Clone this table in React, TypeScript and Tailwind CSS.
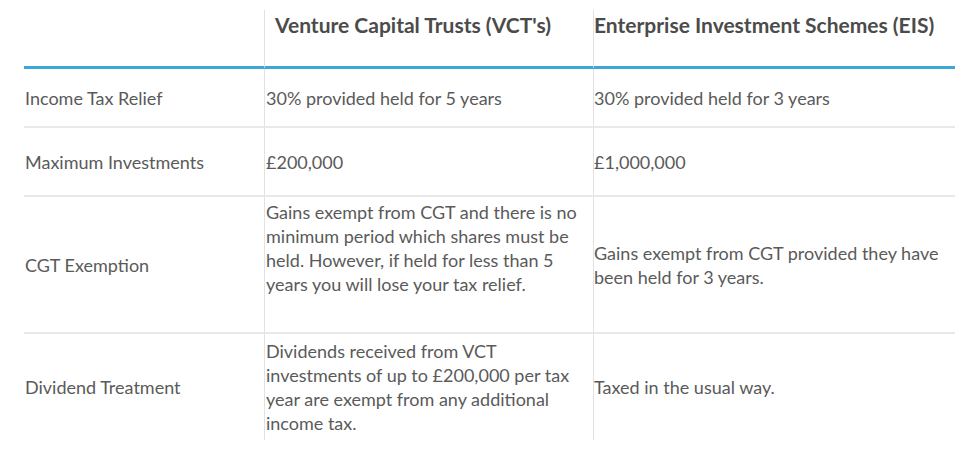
const font = { fontFamily: 'Lato, "Open Sans", sans-serif' };

type Row = {
  label: string;
  vct: string[];
  eis: string[];
  height: string;
  vctTop?: boolean;
  last?: boolean;
};

const rows: Row[] = [
  { label: 'Income Tax Relief', vct: ['30% provided held for 5 years'], eis: ['30% provided held for 3 years'], height: 'h-[59px]' },
  { label: 'Maximum Investments', vct: ['£200,000'], eis: ['£1,000,000'], height: 'h-[69px]' },
  {
    label: 'CGT Exemption',
    vct: [
      'Gains exempt from CGT and there is no',
      'minimum period which shares must be',
      'held. However, if held for less than 5',
      'years you will lose your tax relief.',
    ],
    eis: ['Gains exempt from CGT provided they have', 'been held for 3 years.'],
    height: 'h-[137px]',
    vctTop: true,
  },
  {
    label: 'Dividend Treatment',
    vct: [
      'Dividends received from VCT',
      'investments of up to £200,000 per tax',
      'year are exempt from any additional',
      'income tax.',
    ],
    eis: ['Taxed in the usual way.'],
    height: 'h-[106px]',
    last: true,
  },
];

const Lines = ({ lines }: { lines: string[] }) => (
  <div className="whitespace-nowrap">
    {lines.map((l, i) => (
      <div key={i}>{l}</div>
    ))}
  </div>
);

export default function App() {
  return (
    <div className="w-[966px] h-[449px] bg-white overflow-hidden pt-[10px] pl-[24px]" style={font}>
      <div className="grid grid-cols-[240px_329px_362px] text-[18px] leading-[24px] text-[#5a5a5a]">
        {/* header */}
        <div className="h-[59px] border-b-[3px] border-[#3ca6d6]" />
        <div className="h-[59px] border-b-[3px] border-[#3ca6d6] border-l border-l-[#e2e2e2] pl-[10px] pt-[3px] text-[21px] font-bold text-[#4b4b4b] whitespace-nowrap">
          Venture Capital Trusts (VCT's)
        </div>
        <div className="h-[59px] border-b-[3px] border-[#3ca6d6] border-l border-l-[#e2e2e2] pl-0 pt-[3px] text-[21px] font-bold text-[#4b4b4b] whitespace-nowrap">
          Enterprise Investment Schemes (EIS)
        </div>

        {rows.map((r) => {
          const b = r.last ? '' : 'border-b-2 border-[#e9e9e9]';
          return (
            <>
              <div key={r.label + 'a'} className={`${r.height} ${b} flex items-center pl-[1px]`}>
                {r.label}
              </div>
              <div
                key={r.label + 'b'}
                className={`${r.height} ${b} border-l border-l-[#e2e2e2] flex pl-[1px] ${r.vctTop ? 'items-start pt-[3px]' : 'items-center'}`}
              >
                <Lines lines={r.vct} />
              </div>
              <div key={r.label + 'c'} className={`${r.height} ${b} border-l border-l-[#e2e2e2] flex items-center`}>
                <Lines lines={r.eis} />
              </div>
            </>
          );
        })}
      </div>
    </div>
  );
}
